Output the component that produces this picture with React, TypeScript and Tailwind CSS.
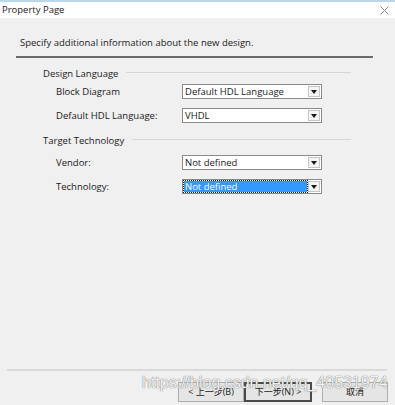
import React from "react";

const font = { fontFamily: '"Open Sans", "Noto Sans CJK SC", sans-serif' };

function Combo({ value, selected }: { value: string; selected?: boolean }) {
  return (
    <div className="flex h-[15px] w-[140px] border border-[#8a8a8a] bg-white">
      <div className="flex flex-1 items-center p-[1px]">
        <div
          className={`flex h-full w-full items-center px-[1px] text-[9.5px] leading-none ${
            selected ? "bg-[#3399ff] text-white outline-1 outline-dotted outline-[#1a1a1a]" : "text-[#1a1a1a]"
          }`}
        >
          {value}
        </div>
      </div>
      <div className="my-[1px] mr-[1px] flex w-[12px] items-center justify-center border border-[#c5c5c5] bg-[#f4f4f4]">
        <svg width="6" height="4" viewBox="0 0 6 4">
          <path d="M0 0h6L3 4z" fill="#1a1a1a" />
        </svg>
      </div>
    </div>
  );
}

function Row({ label, value, selected, mt }: { label: string; value: string; selected?: boolean; mt: string }) {
  return (
    <div className={`flex h-[15px] items-center pl-[56px] ${mt}`}>
      <span className="w-[126px] text-[9.5px] leading-[15px] text-[#1a1a1a]">{label}</span>
      <Combo value={value} selected={selected} />
    </div>
  );
}

function GroupHeader({ title, mt }: { title: string; mt: string }) {
  return (
    <div className={`flex h-[14px] items-center pl-[43px] pr-[44px] ${mt}`}>
      <span className="text-[9.5px] leading-[14px] text-[#1a1a1a]">{title}</span>
      <div className="mb-[3px] ml-[8px] h-px flex-1 bg-[#d5d5d5]" />
    </div>
  );
}

export default function App() {
  return (
    <div className="relative flex h-[405px] w-[395px] flex-col overflow-hidden bg-[#f0f0f0]" style={font}>
      {/* Title bar */}
      <div className="h-[2px] bg-[#b8d8f2]" />
      <div className="flex h-[16px] items-center justify-between bg-white pl-[2px] pr-[6px]">
        <span className="text-[9.5px] leading-none text-[#1a1a1a]">Property Page</span>
        <svg width="9" height="9" viewBox="0 0 9 9">
          <path d="M0.5 0.5l8 8M8.5 0.5l-8 8" stroke="#8a8a8a" strokeWidth="1" />
        </svg>
      </div>

      {/* Header */}
      <div className="mt-[18px] h-[14px] pl-[20px] text-[9.5px] leading-[14px] text-[#1a1a1a]">
        Specify additional information about the new design.
      </div>
      <div className="ml-[16px] mt-[6px] h-[2px] w-[357px] bg-[#6b6b6b]" />

      {/* Design Language */}
      <GroupHeader title="Design Language" mt="mt-[9px]" />
      <Row label="Block Diagram" value="Default HDL Language" mt="mt-[3px]" />
      <Row label="Default HDL Language:" value="VHDL" mt="mt-[9px]" />

      {/* Target Technology */}
      <GroupHeader title="Target Technology" mt="mt-[11px]" />
      <Row label="Vendor:" value="Not defined" mt="mt-[7px]" />
      <Row label="Technology:" value="Not defined" selected mt="mt-[9px]" />

      <div className="flex-1" />

      {/* Footer */}
      <div className="ml-[7px] h-[2px] w-[380px] bg-[#dadada]" />
      <div className="mb-[3px] mt-[11px] flex h-[20px] pl-[178px]">
        <button className="flex h-full w-[66px] items-center justify-center border border-[#adadad] bg-[#e5e5e5] text-[9px] text-[#1a1a1a]">
          &lt; 上一步(B)
        </button>
        <button className="flex h-full w-[68px] items-center justify-center border-2 border-[#4a4a4a] bg-[#e5e5e5] text-[9px] text-[#1a1a1a]">
          下一步(N) &gt;
        </button>
        <button className="ml-[10px] flex h-full w-[66px] items-center justify-center border border-[#adadad] bg-[#e5e5e5] text-[9px] text-[#1a1a1a]">
          取消
        </button>
      </div>

      {/* Watermark */}
      <div
        className="pointer-events-none absolute left-[142px] top-[373px] text-[16px] leading-[20px] text-white/90 [text-shadow:0_0_1px_#7a7a7a,0_0_1px_#7a7a7a]"
        style={{ fontFamily: '"Liberation Sans", sans-serif' }}
      >
        https://blog.csdn.net/qq_40531974
      </div>
    </div>
  );
}
